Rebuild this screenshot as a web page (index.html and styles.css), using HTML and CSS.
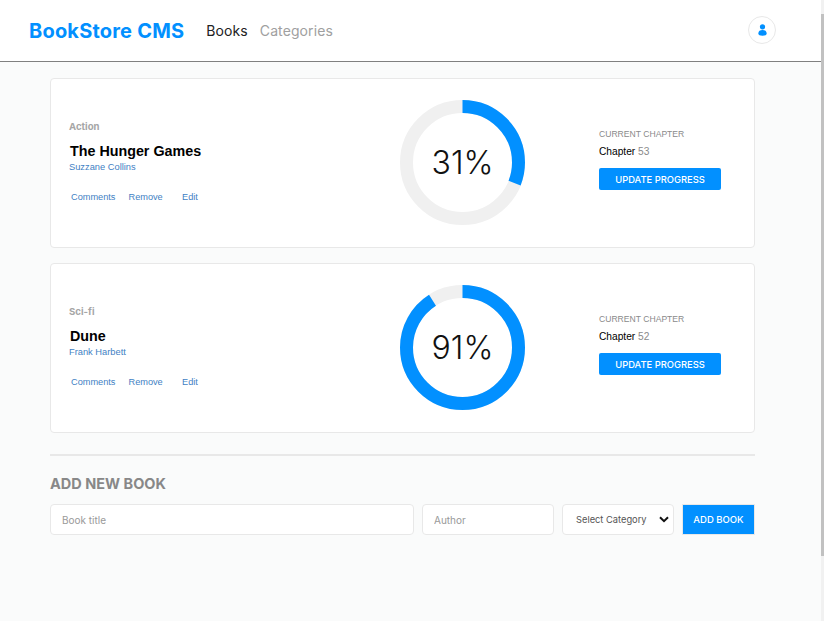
FILE: index.html
```html
<!DOCTYPE html>
<html lang="en">
<head>
  <meta charset="UTF-8">
  <meta name="viewport" content="width=device-width, initial-scale=1.0">
  <title>BookStore CMS</title>
  <link rel="stylesheet" href="styles.css">
</head>
<body>
  <div class="page">
    <header class="navbar">
      <div class="nav-left">
        <span class="logo">BookStore CMS</span>
        <nav class="nav-links">
          <a class="active" href="#">Books</a>
          <a href="#">Categories</a>
        </nav>
      </div>
      <div class="user-icon">
        <svg width="9" height="12" viewBox="0 0 10 13"><circle cx="5" cy="3" r="2.9" fill="#0290ff"/><path d="M0.4 10.4c0-2.6 1.8-3.8 4.6-3.8s4.6 1.2 4.6 3.8c0 1.7-1.7 2.5-4.6 2.5S0.4 12.1 0.4 10.4z" fill="#0290ff"/></svg>
      </div>
    </header>

    <main class="content">
      <!-- Book list -->
      <section class="book-card">
        <div class="book-info">
          <p class="category">Action</p>
          <h2 class="book-title">The Hunger Games</h2>
          <p class="author">Suzzane Collins</p>
          <div class="book-actions">
            <a class="action-comments" href="#">Comments</a>
            <a class="action-remove" href="#">Remove</a>
            <a href="#">Edit</a>
          </div>
        </div>
        <div class="progress-wrap">
          <svg class="ring" width="125" height="125" viewBox="0 0 125 125">
            <circle class="ring-track" cx="62.5" cy="62.5" r="56"/>
            <circle class="ring-value" cx="62.5" cy="62.5" r="56" pathLength="100" stroke-dasharray="31 100" transform="rotate(-90 62.5 62.5)"/>
          </svg>
          <span class="percent">31%</span>
        </div>
        <div class="chapter">
          <p class="chapter-label">CURRENT CHAPTER</p>
          <p class="chapter-name">Chapter <span>53</span></p>
          <button class="update-btn" type="button">UPDATE PROGRESS</button>
        </div>
      </section>

      <section class="book-card">
        <div class="book-info">
          <p class="category">Sci-fi</p>
          <h2 class="book-title">Dune</h2>
          <p class="author">Frank Harbett</p>
          <div class="book-actions">
            <a class="action-comments" href="#">Comments</a>
            <a class="action-remove" href="#">Remove</a>
            <a href="#">Edit</a>
          </div>
        </div>
        <div class="progress-wrap">
          <svg class="ring" width="125" height="125" viewBox="0 0 125 125">
            <circle class="ring-track" cx="62.5" cy="62.5" r="56"/>
            <circle class="ring-value" cx="62.5" cy="62.5" r="56" pathLength="100" stroke-dasharray="91 100" transform="rotate(-90 62.5 62.5)"/>
          </svg>
          <span class="percent">91%</span>
        </div>
        <div class="chapter">
          <p class="chapter-label">CURRENT CHAPTER</p>
          <p class="chapter-name">Chapter <span>52</span></p>
          <button class="update-btn" type="button">UPDATE PROGRESS</button>
        </div>
      </section>

      <!-- Add book form -->
      <section class="add-book">
        <h3>ADD NEW BOOK</h3>
        <form class="add-form">
          <input class="input-title" type="text" placeholder="Book title">
          <input class="input-author" type="text" placeholder="Author">
          <div class="select-wrap">
            <select class="input-category">
              <option>Select Category</option>
            </select>
            <svg class="select-arrow" width="10" height="7" viewBox="0 0 10 7"><path d="M1 1.2l4 4 4-4" fill="none" stroke="#111" stroke-width="2"/></svg>
          </div>
          <button class="add-btn" type="button">ADD BOOK</button>
        </form>
      </section>
    </main>
  </div>
  <div class="scrollbar"><div class="scrollbar-thumb"></div></div>
</body>
</html>
```

FILE: styles.css
```css
/* General Layout */
html,
body {
  height: 100%;
}

body {
  margin: 0;
  display: flex;
  overflow: hidden;
  background-color: #fafbfb;
  font-family: "Inter", "Liberation Sans", sans-serif;
}

p,
h2,
h3 {
  margin: 0;
}

a {
  text-decoration: none;
}

.page {
  flex: 1;
  min-width: 0;
}

/* Fake scrollbar */
.scrollbar {
  width: 3px;
  padding-top: 14px;
  background-color: #f1f1f1;
}

.scrollbar-thumb {
  height: 542px;
  background-color: #c1c1c1;
}

/* Navbar */
.navbar {
  height: 61px;
  padding: 0 45px 0 29px;
  display: flex;
  align-items: center;
  justify-content: space-between;
  background-color: #fff;
  border-bottom: 1px solid #808080;
}

.nav-left {
  display: flex;
  align-items: center;
  gap: 22px;
}

.logo {
  color: #0290ff;
  font-size: 20px;
  font-weight: 700;
  letter-spacing: 0.2px;
}

.nav-links {
  display: flex;
  gap: 12px;
  font-size: 14px;
  letter-spacing: 0.1px;
}

.nav-links a {
  color: #a0a0a0;
}

.nav-links a.active {
  color: #222;
}

.user-icon {
  width: 26px;
  height: 26px;
  margin-bottom: 2px;
  display: flex;
  align-items: center;
  justify-content: center;
  background-color: #fff;
  border: 1px solid #e8e8e8;
  border-radius: 50%;
}

/* Book cards */
.content {
  width: 705px;
  margin-left: 50px;
  padding-top: 16px;
}

.book-card {
  height: 166px;
  margin-bottom: 15px;
  padding-bottom: 2px;
  display: flex;
  align-items: center;
  background-color: #fff;
  border: 1px solid #e8e8e8;
  border-radius: 4px;
}

.book-info {
  width: 349px;
  padding-left: 18px;
  box-sizing: border-box;
}

.category {
  color: #a6a6a6;
  font-size: 9.6px;
  font-weight: 700;
  line-height: 12px;
}

.book-title {
  margin-top: 9px;
  margin-left: 1px;
  color: #000;
  font-family: "Liberation Sans", Arial, sans-serif;
  font-size: 14.3px;
  font-weight: 700;
  line-height: 18px;
}

.author {
  margin-top: 1px;
  color: #3f7fc4;
  font-family: "Liberation Sans", Arial, sans-serif;
  font-size: 9.3px;
  line-height: 12px;
}

.book-actions {
  margin-top: 18px;
  margin-left: 2px;
  display: flex;
  font-family: "Liberation Sans", Arial, sans-serif;
  font-size: 9.2px;
  line-height: 12px;
}

.book-actions a {
  color: #3f7fc4;
}

.action-comments {
  width: 57.5px;
}

.action-remove {
  width: 53.5px;
}

.progress-wrap {
  position: relative;
  width: 125px;
  height: 125px;
}

.ring {
  display: block;
}

.ring-track,
.ring-value {
  fill: none;
  stroke-width: 13;
}

.ring-track {
  stroke: #f0f0f0;
}

.ring-value {
  stroke: #0290ff;
}

.percent {
  position: absolute;
  top: 0;
  left: 0;
  width: 100%;
  line-height: 125px;
  text-align: center;
  color: #111;
  font-size: 32px;
  font-weight: 300;
}

.chapter {
  margin-left: 74px;
  margin-bottom: 6px;
}

.chapter-label {
  color: #8a8a8a;
  font-family: "Liberation Sans", Arial, sans-serif;
  font-size: 8.6px;
  line-height: 12px;
}

.chapter-name {
  margin-top: 5px;
  color: #000;
  font-family: "Liberation Sans", Arial, sans-serif;
  font-size: 10.2px;
  line-height: 14px;
}

.chapter-name span {
  color: #8a8a8a;
}

.update-btn {
  display: block;
  width: 122px;
  height: 22px;
  margin-top: 9px;
  padding: 0;
  border: none;
  border-radius: 2px;
  background-color: #0290ff;
  color: #fff;
  font-family: "Inter", "Liberation Sans", sans-serif;
  font-size: 9.4px;
  font-weight: 500;
}

/* Add book form */
.add-book {
  margin-top: 21px;
  padding-top: 19px;
  border-top: 2px solid #e8e8e8;
}

.add-book h3 {
  color: #888;
  font-size: 14.5px;
  font-weight: 700;
  line-height: 18px;
}

.add-form {
  margin-top: 11px;
  display: flex;
  gap: 8px;
}

.add-form input,
.add-form select {
  height: 31px;
  box-sizing: border-box;
  background-color: #fff;
  border: 1px solid #e8e8e8;
  border-radius: 4px;
  font-family: "Inter", "Liberation Sans", sans-serif;
  outline: none;
}

.add-form input {
  padding: 0 11px;
  font-size: 10px;
}

.add-form input::placeholder {
  color: #999;
}

.input-title {
  width: 364px;
}

.input-author {
  width: 132px;
}

.select-wrap {
  position: relative;
  display: flex;
}

.input-category {
  width: 112px;
  padding: 0 0 0 13px;
  appearance: none;
  color: #555;
  font-size: 9.3px;
}

.select-arrow {
  position: absolute;
  top: 12px;
  right: 5px;
}

.add-btn {
  width: 73px;
  height: 31px;
  padding: 0;
  border: 1px solid #e8e8e8;
  background-color: #0290ff;
  color: #fff;
  font-family: "Inter", "Liberation Sans", sans-serif;
  font-size: 9.5px;
  font-weight: 500;
}
```
